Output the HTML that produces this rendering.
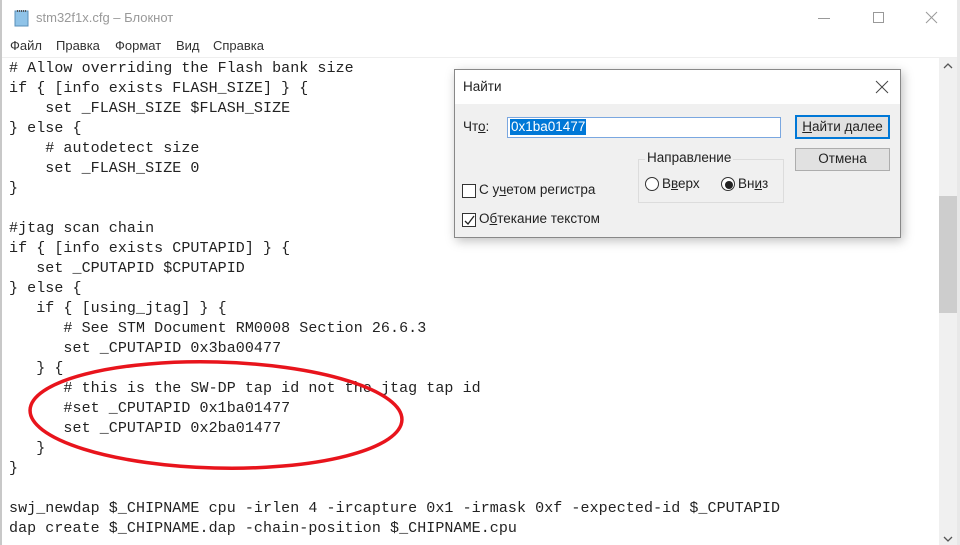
<!DOCTYPE html>
<html><head><meta charset="utf-8">
<style>
*{margin:0;padding:0;box-sizing:border-box}
body{width:960px;height:545px;overflow:hidden;background:#fff;position:relative;font-family:"Segoe UI","Liberation Sans","DejaVu Sans",sans-serif}
.lb{position:absolute;left:0;top:0;width:2px;height:545px;background:#c8c8c8}
.title{position:absolute;left:2px;top:0;width:958px;height:36px;background:#fff;font-size:13px;color:#999}
.title .t{position:absolute;left:34px;top:10px}
.menu{position:absolute;left:2px;top:36px;width:958px;height:22px;font-size:13px;color:#333;border-bottom:1px solid #eee}
.menu span{position:absolute;top:2px}
pre{position:absolute;left:9px;top:59px;font-family:"Liberation Mono",monospace;font-size:15px;letter-spacing:0.07px;line-height:20px;color:#222}
.sb{position:absolute;left:939px;top:58px;width:18px;height:487px;background:#f0f0f0}
.thumb{position:absolute;left:939px;top:196px;width:18px;height:117px;background:#cdcdcd}
.re{position:absolute;left:957px;top:0;width:3px;height:545px;background:#e8e8e8}
.dlg{position:absolute;left:454px;top:69px;width:447px;height:169px;background:#f0f0f0;border:1px solid #888;box-shadow:2px 3px 10px rgba(0,0,0,.25);font-size:13.5px;color:#222}
.dt{position:absolute;left:0;top:0;width:445px;height:34px;background:#fff}
.abs{position:absolute}
.btn{position:absolute;background:#e1e1e1;border:1px solid #adadad;text-align:center;line-height:20px}
.cb{position:absolute;width:14px;height:14px;border:1px solid #333;background:#fff}
.rd{position:absolute;width:14px;height:14px;border:1px solid #333;border-radius:50%;background:#fff}
</style></head><body>
<div class="lb"></div>
<div class="title">
<svg class="abs" style="left:12px;top:9px" width="16" height="18"><rect x="1" y="2" width="13" height="15" fill="#8fc3e8" stroke="#5a8fb8"/><line x1="3" y1="2" x2="13" y2="2" stroke="#555" stroke-width="2" stroke-dasharray="1 1"/></svg>
<span class="t">stm32f1x.cfg – Блокнот</span>
<svg class="abs" style="left:810px;top:10px" width="140" height="20" stroke="#999" fill="none"><line x1="6" y1="8.5" x2="18" y2="8.5"/><rect x="61.5" y="2.5" width="10" height="10"/><line x1="114" y1="2" x2="125" y2="13"/><line x1="125" y1="2" x2="114" y2="13"/></svg>
</div>
<div class="menu"><span style="left:8px">Файл</span><span style="left:54px">Правка</span><span style="left:113px">Формат</span><span style="left:174px">Вид</span><span style="left:211px">Справка</span></div>
<pre># Allow overriding the Flash bank size
if { [info exists FLASH_SIZE] } {
    set _FLASH_SIZE $FLASH_SIZE
} else {
    # autodetect size
    set _FLASH_SIZE 0
}

#jtag scan chain
if { [info exists CPUTAPID] } {
   set _CPUTAPID $CPUTAPID
} else {
   if { [using_jtag] } {
      # See STM Document RM0008 Section 26.6.3
      set _CPUTAPID 0x3ba00477
   } {
      # this is the SW-DP tap id not the jtag tap id
      #set _CPUTAPID 0x1ba01477
      set _CPUTAPID 0x2ba01477
   }
}

swj_newdap $_CHIPNAME cpu -irlen 4 -ircapture 0x1 -irmask 0xf -expected-id $_CPUTAPID
dap create $_CHIPNAME.dap -chain-position $_CHIPNAME.cpu</pre>
<div class="sb"></div><div class="thumb"></div><div class="re"></div>
<svg class="abs" style="left:939px;top:58px" width="18" height="487" fill="none" stroke="#555" stroke-width="1.3"><polyline points="5,10 9,6 13,10"/><polyline points="5,479 9,483 13,479"/></svg>
<svg class="abs" style="left:0;top:0" width="960" height="545"><ellipse cx="216" cy="415" rx="186" ry="53" fill="none" stroke="#e8141c" stroke-width="3.5" transform="rotate(1.5 216 415)"/></svg>
<div class="dlg">
<div class="dt"><span class="abs" style="left:8px;top:9px">Найти</span>
<svg class="abs" style="left:420px;top:10px" width="14" height="14" stroke="#444"><line x1="1" y1="1" x2="13" y2="13"/><line x1="13" y1="1" x2="1" y2="13"/></svg></div>
<span class="abs" style="left:8px;top:49px">Чт<u>о</u>:</span>
<div class="abs" style="left:52px;top:47px;width:274px;height:21px;background:#fff;border:1px solid #7aa7e0"></div>
<span class="abs" style="left:55px;top:49px;background:#0078d7;color:#fff;padding:0 1px;line-height:16px">0x1ba01477</span>
<div class="btn" style="left:340px;top:45px;width:95px;height:24px;border:2px solid #0078d7;line-height:19px"><u>Н</u>айти далее</div>
<div class="btn" style="left:340px;top:78px;width:95px;height:23px">Отмена</div>
<div class="abs" style="left:183px;top:89px;width:146px;height:44px;border:1px solid #dcdcdc"></div>
<span class="abs" style="left:190px;top:80px;background:#f0f0f0;padding:0 2px">Направление</span>
<div class="rd" style="left:190px;top:107px"></div><span class="abs" style="left:207px;top:106px">В<u>в</u>ерх</span>
<div class="rd" style="left:266px;top:107px"></div><div class="abs" style="left:270px;top:111px;width:8px;height:8px;border-radius:50%;background:#222"></div><span class="abs" style="left:283px;top:106px">Вн<u>и</u>з</span>
<div class="cb" style="left:7px;top:114px"></div><span class="abs" style="left:24px;top:112px">С у<u>ч</u>етом регистра</span>
<div class="cb" style="left:7px;top:143px"></div>
<svg class="abs" style="left:8px;top:144px" width="13" height="13" fill="none" stroke="#222" stroke-width="1.3"><polyline points="2,7 5,10 11,2"/></svg>
<span class="abs" style="left:24px;top:141px">О<u>б</u>текание текстом</span>
</div>
</body></html>
